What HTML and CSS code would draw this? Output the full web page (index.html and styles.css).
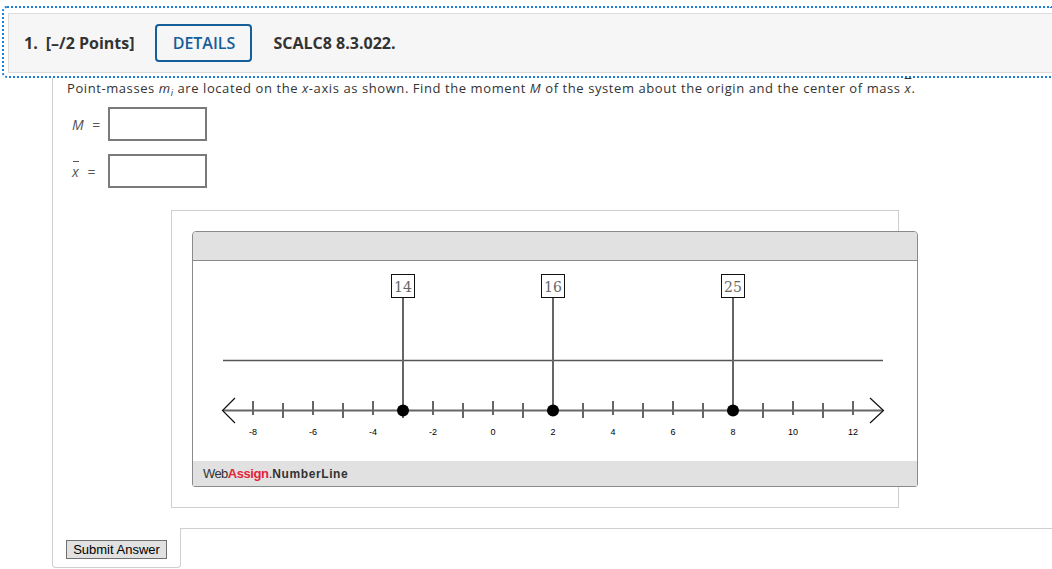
FILE: index.html
```html
<!DOCTYPE html>
<html>
<head>
<meta charset="utf-8">
<link rel="stylesheet" href="styles.css">
</head>
<body>
<div class="focus">
  <div class="qhead">
    <span class="qnum">1.</span>
    <span class="qpts">[–/2 Points]</span>
    <span class="details">DETAILS</span>
    <span class="qcode">SCALC8 8.3.022.</span>
  </div>
</div>
<div class="content">
  <p class="prompt">Point-masses <i>m<sub>i</sub></i> are located on the <i>x</i>-axis as shown. Find the moment <i>M</i> of the system about the origin and the center of mass <i class="bar">x</i>.</p>
  <div class="answer-row">
    <span class="lbl"><i>M</i> <span class="eq">=</span></span>
    <span class="inp"></span>
  </div>
  <div class="answer-row">
    <span class="lbl"><i class="bar2">x</i> <span class="eq">=</span></span>
    <span class="inp"></span>
  </div>
  <div class="panel">
    <div class="applet">
      <div class="applet-head"></div>
      <svg class="nl" width="724" height="200" viewBox="0 0 724 200">
        <line x1="30" y1="99.5" x2="690" y2="99.5" stroke="#555" stroke-width="1.5"/>
        <g stroke="#666" stroke-width="2">
          <line x1="30" y1="149.5" x2="690" y2="149.5"/>
          <line x1="60" y1="140" x2="60" y2="154"/>
          <line x1="120" y1="140" x2="120" y2="154"/>
          <line x1="180" y1="140" x2="180" y2="154"/>
          <line x1="240" y1="140" x2="240" y2="154"/>
          <line x1="300" y1="140" x2="300" y2="154"/>
          <line x1="360" y1="140" x2="360" y2="154"/>
          <line x1="420" y1="140" x2="420" y2="154"/>
          <line x1="480" y1="140" x2="480" y2="154"/>
          <line x1="540" y1="140" x2="540" y2="154"/>
          <line x1="600" y1="140" x2="600" y2="154"/>
          <line x1="660" y1="140" x2="660" y2="154"/>
          <line x1="90" y1="142" x2="90" y2="157"/>
          <line x1="150" y1="142" x2="150" y2="157"/>
          <line x1="210" y1="142" x2="210" y2="157"/>
          <line x1="270" y1="142" x2="270" y2="157"/>
          <line x1="330" y1="142" x2="330" y2="157"/>
          <line x1="390" y1="142" x2="390" y2="157"/>
          <line x1="450" y1="142" x2="450" y2="157"/>
          <line x1="510" y1="142" x2="510" y2="157"/>
          <line x1="570" y1="142" x2="570" y2="157"/>
          <line x1="630" y1="142" x2="630" y2="157"/>
          <line x1="210" y1="36" x2="210" y2="149"/>
          <line x1="360" y1="36" x2="360" y2="149"/>
          <line x1="540" y1="36" x2="540" y2="149"/>
        </g>
        <g stroke="#111" stroke-width="1.2" fill="none">
          <polyline points="42,137 29.5,149.5 42,162"/>
          <polyline points="677,137 690.5,149.5 677,162"/>
        </g>
        <g fill="#000">
          <circle cx="210" cy="149.5" r="6"/>
          <circle cx="360" cy="149.5" r="6"/>
          <circle cx="540" cy="149.5" r="6"/>
        </g>
        <g fill="#fff" stroke="#111" stroke-width="1">
          <rect x="198.5" y="13.5" width="23" height="23"/>
          <rect x="348.5" y="13.5" width="23" height="23"/>
          <rect x="528.5" y="13.5" width="23" height="23"/>
        </g>
        <g class="mass" text-anchor="middle">
          <text x="210" y="31">14</text>
          <text x="360" y="31">16</text>
          <text x="540" y="31">25</text>
        </g>
        <g class="tick" text-anchor="middle">
          <text x="60" y="174">-8</text>
          <text x="120" y="174">-6</text>
          <text x="180" y="174">-4</text>
          <text x="240" y="174">-2</text>
          <text x="300" y="174">0</text>
          <text x="360" y="174">2</text>
          <text x="420" y="174">4</text>
          <text x="480" y="174">6</text>
          <text x="540" y="174">8</text>
          <text x="600" y="174">10</text>
          <text x="660" y="174">12</text>
        </g>
      </svg>
      <div class="applet-foot"><span class="wa-web">Web</span><span class="wa-assign">Assign</span><span class="wa-dot">.</span><span class="wa-nl">NumberLine</span></div>
    </div>
  </div>
</div>
<div class="submit-row">
  <div class="submit-cell"><span class="submit">Submit Answer</span></div>
  <div class="submit-rest"></div>
</div>
</body>
</html>
```

FILE: styles.css
```css
html, body {
  margin: 0;
  padding: 0;
  background: #fff;
}
body {
  font-family: "Open Sans", "DejaVu Sans", sans-serif;
  color: #333;
  width: 1052px;
  overflow: hidden;
}
.focus {
  margin: 6px 0 0 2px;
  border: 2px dotted #1b7fd8;
  border-right: none;
  border-radius: 5px 0 0 5px;
  padding: 5px 0 3px 4px;
}
.qhead {
  height: 58px;
  background: #f6f6f6;
  border: 1px solid #dcdcdc;
  border-right: none;
  display: flex;
  align-items: center;
  padding-left: 15px;
  font-size: 16px;
  color: #333;
}
.qnum {
  font-weight: 700;
  margin-right: 8px;
}
.qpts {
  font-weight: 700;
  margin-right: 21px;
}
.details {
  box-sizing: border-box;
  width: 97px;
  height: 38px;
  border: 2px solid #145e99;
  border-radius: 4px;
  color: #145e99;
  display: flex;
  align-items: center;
  justify-content: center;
  font-weight: 600;
  margin-right: 21px;
}
.qcode {
  font-weight: 700;
}
.content {
  margin-left: 52px;
  border-left: 1px solid #cfcfcf;
  padding: 1px 0 20px 14px;
}
.prompt {
  margin: 0;
  font-size: 13px;
  line-height: 18px;
  letter-spacing: 0.58px;
  color: #333;
}
.prompt sub {
  font-size: 9px;
  vertical-align: -3px;
  line-height: 0;
}
.bar {
  text-decoration: overline;
}
.bar2 {
  display: inline-block;
  position: relative;
}
.bar2::before {
  content: "";
  position: absolute;
  left: 1px;
  right: 0;
  top: -1px;
  border-top: 1px solid #555;
}
.answer-row {
  display: flex;
  align-items: center;
  margin-top: 10px;
}
.answer-row + .answer-row {
  margin-top: 13px;
}
.lbl {
  width: 41px;
  padding-left: 5px;
  box-sizing: border-box;
  font-size: 14px;
  color: #555;
}
.eq {
  margin-left: 5px;
}
.inp {
  box-sizing: border-box;
  width: 99px;
  height: 34px;
  border: 2px solid #7a7a7a;
  background: #fff;
}
.panel {
  margin: 22px 0 0 104px;
  width: 686px;
  padding: 20px;
  border: 1px solid #cfcfcf;
}
.applet {
  width: 724px;
  border: 1px solid #8a8a8a;
  border-radius: 4px 4px 3px 3px;
  background: #fff;
  position: relative;
}
.applet-head {
  height: 28px;
  background: #e1e1e1;
  border-bottom: 1px solid #8a8a8a;
  border-radius: 3px 3px 0 0;
}
.nl {
  display: block;
}
.mass text {
  font-family: "DejaVu Serif", "Liberation Serif", serif;
  font-size: 14px;
  fill: #666;
}
.tick text {
  font-family: "Liberation Sans", Arial, sans-serif;
  font-size: 9px;
  fill: #000;
}
.applet-foot {
  height: 25px;
  background: #e1e1e1;
  display: flex;
  align-items: center;
  padding-left: 10px;
  font-family: "Liberation Sans", Arial, sans-serif;
  font-size: 13px;
}
.wa-web {
  color: #333;
  letter-spacing: -0.6px;
}
.wa-assign {
  color: #e4243b;
  font-weight: 700;
  letter-spacing: -0.4px;
}
.wa-dot {
  color: #333;
}
.wa-nl {
  color: #333;
  font-weight: 700;
  font-size: 12px;
  letter-spacing: 0.6px;
}
.submit-row {
  display: flex;
  height: 40px;
}
.submit-cell {
  box-sizing: border-box;
  width: 129px;
  margin-left: 52px;
  border: 1px solid #cfcfcf;
  border-top: none;
  border-radius: 0 0 4px 4px;
  padding: 12px 0 0 13px;
}
.submit-rest {
  flex: 1;
  border-top: 1px solid #cfcfcf;
}
.submit {
  display: block;
  box-sizing: border-box;
  height: 19px;
  width: 101px;
  background: #e1e1e1;
  border: 1px solid #707070;
  font-family: "Liberation Sans", Arial, sans-serif;
  font-size: 13px;
  line-height: 17px;
  color: #000;
  text-align: center;
}
```
